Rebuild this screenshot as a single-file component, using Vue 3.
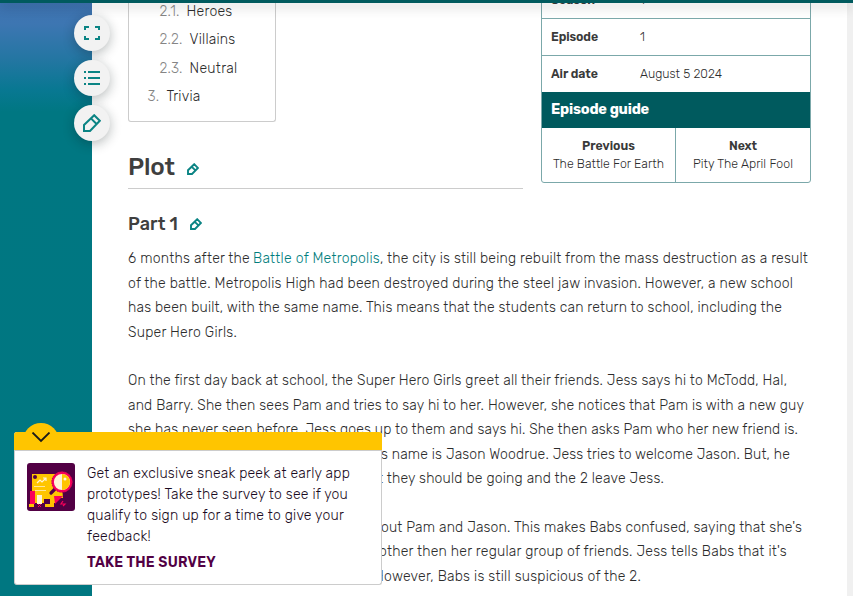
<script setup>
import { ref } from 'vue';

const surveyOpen = ref(true);

const contents = [
    { number: '2.1.', title: 'Heroes', numberWidth: 20, width: 46, nested: true },
    { number: '2.2.', title: 'Villains', numberWidth: 23, width: 46, nested: true },
    { number: '2.3.', title: 'Neutral', numberWidth: 23, width: 48, nested: true },
    { number: '3.', title: 'Trivia', numberWidth: 12, width: 34, nested: false },
];

const details = [
    { label: 'Season', value: '1', labelWidth: 44, width: 6 },
    { label: 'Episode', value: '1', labelWidth: 47, width: 6 },
    { label: 'Air date', value: 'August 5 2024', labelWidth: 47, width: 82 },
];

const guide = [
    { label: 'Previous', title: 'The Battle For Earth', labelWidth: 53, width: 111 },
    { label: 'Next', title: 'Pity The April Fool', labelWidth: 28, width: 100 },
];

// Each line is a list of runs: text, set width and the gap before it
const paragraphs = [
    [
        [
            { text: '6 months after the', width: 122, gap: 0 },
            { text: 'Battle of Metropolis', width: 127, gap: 3, link: true },
            { text: ', the city is still being rebuilt from the mass destruction as a result', width: 428, gap: 0 },
        ],
        [{ text: 'of the battle. Metropolis High had been destroyed during the steel jaw invasion. However, a new school', width: 665, gap: 0 }],
        [{ text: 'has been built, with the same name. This means that the students can return to school, including the', width: 654, gap: 0 }],
        [{ text: 'Super Hero Girls.', width: 109, gap: 0 }],
    ],
    [
        [{ text: 'On the first day back at school, the Super Hero Girls greet all their friends. Jess says hi to McTodd, Hal,', width: 658, gap: 0 }],
        [{ text: 'and Barry. She then sees Pam and tries to say hi to her. However, she notices that Pam is with a new guy', width: 676, gap: 0 }],
        [{ text: 'she has never seen before. Jess goes up to them and says hi. She then asks Pam who her new friend is.', width: 670, gap: 0 }],
        [{ text: 's name is Jason Woodrue. Jess tries to welcome Jason. But, he', width: 409, gap: 253 }],
        [{ text: 't they should be going and the 2 leave Jess.', width: 286, gap: 250 }],
    ],
    [
        [{ text: 'out Pam and Jason. This makes Babs confused, saying that she\'s', width: 421, gap: 253 }],
        [{ text: 'other then her regular group of friends. Jess tells Babs that it\'s', width: 408, gap: 251 }],
        [{ text: 'However, Babs is still suspicious of the 2.', width: 267, gap: 246 }],
    ],
];

const surveyLines = [
    { text: 'Get an exclusive sneak peek at early app', width: 263 },
    { text: 'prototypes! Take the survey to see if you', width: 261 },
    { text: 'qualify to sign up for a time to give your', width: 257 },
    { text: 'feedback!', width: 64 },
];

// Track the text out so that it fills the given width
const vFit = {
    mounted(el, { value }) {
        const natural = el.getBoundingClientRect().width;
        el.style.letterSpacing = `${(value - natural) / el.textContent.length}px`;
    },
};
</script>

<template>
    <div class="page">
        <div class="topbar"></div>

        <aside class="backdrop">
            <nav class="tools">
                <button class="tool">
                    <svg width="18" height="18" viewBox="0 0 18 18"><path d="M2 6V3H6M12 3H16V6M16 12V15H12M6 15H2V12" /></svg>
                </button>
                <button class="tool">
                    <svg width="18" height="18" viewBox="0 0 18 18"><path d="M5 3H17M5 9H17M5 15H17M1 3H3M1 9H3M1 15H3" /></svg>
                </button>
                <button class="tool">
                    <svg width="18" height="18" viewBox="0 0 18 18"><path d="M1 17V11L11.2 1.2L16.8 6.8L7 17ZM8 4.4L13.3 9.7" /></svg>
                </button>
            </nav>
        </aside>

        <main class="article">
            <div class="intro">
                <div class="lead">
                    <ul class="toc">
                        <li v-for="item in contents" :key="item.number" :class="{ nested: item.nested }">
                            <span v-fit="item.numberWidth" class="toc-number fit">{{ item.number }}</span>
                            <span v-fit="item.width" class="fit">{{ item.title }}</span>
                        </li>
                    </ul>
                    <h2>
                        <span v-fit="47" class="fit">Plot</span>
                        <svg class="pencil" width="12" height="12" viewBox="0 0 12 12"><path d="M1 11V7.2L7.2 1.2L11 5L5 11ZM4.8 3.8L8.2 7.2" /></svg>
                    </h2>
                </div>

                <section class="infobox">
                    <div v-for="row in details" :key="row.label" class="row">
                        <div class="label"><span v-fit="row.labelWidth" class="fit">{{ row.label }}</span></div>
                        <div><span v-fit="row.width" class="fit">{{ row.value }}</span></div>
                    </div>
                    <div class="guide-title"><span v-fit="98" class="fit">Episode guide</span></div>
                    <div class="guide">
                        <div v-for="cell in guide" :key="cell.label" class="cell">
                            <span v-fit="cell.labelWidth" class="label fit">{{ cell.label }}</span>
                            <span v-fit="cell.width" class="fit">{{ cell.title }}</span>
                        </div>
                    </div>
                </section>
            </div>

            <h3>
                <span v-fit="50" class="fit">Part 1</span>
                <svg class="pencil" width="12" height="12" viewBox="0 0 12 12"><path d="M1 11V7.2L7.2 1.2L11 5L5 11ZM4.8 3.8L8.2 7.2" /></svg>
            </h3>

            <div class="story">
                <p v-for="(lines, p) in paragraphs" :key="p">
                    <span v-for="(line, l) in lines" :key="l" class="line">
                        <span
                            v-for="run in line"
                            :key="run.text"
                            v-fit="run.width"
                            class="fit"
                            :class="{ link: run.link }"
                            :style="{ marginLeft: run.gap + 'px' }"
                        >{{ run.text }}</span>
                    </span>
                </p>
            </div>
        </main>

        <div class="gutter"></div>

        <div v-if="surveyOpen" class="survey">
            <div class="survey-tab"></div>
            <div class="survey-bar" @click="surveyOpen = false">
                <svg width="20" height="12" viewBox="0 0 20 12"><path d="M1.5 0.5L10 9L18.5 0.5" /></svg>
            </div>
            <div class="survey-body">
                <svg class="survey-art" width="48" height="48" viewBox="0 0 48 48">
                    <rect width="48" height="48" rx="3" fill="#520044" />
                    <path d="M5 11H34L36 35H28V40H8V30H5Z" fill="#ffc500" />
                    <circle cx="8" cy="14" r="2" fill="#520044" />
                    <path d="M10 20L13 17L15 19L19 15M16 15H19V18" fill="none" stroke="#fff3d8" stroke-width="1.2" />
                    <path d="M7 23.5H18M8 27.5H19" stroke="#ffe69a" stroke-width="1" />
                    <path d="M3 28H8V41H3Z" fill="#fa005a" />
                    <path d="M10 32H15V41H10Z" fill="#fff3d8" />
                    <path d="M17 36H23V44H17Z" fill="#520044" />
                    <path d="M2 41H7V44H2ZM18 41H23V44H18Z" fill="#ffc500" />
                    <path d="M23 36H27V44H23Z" fill="#ffc500" />
                    <path d="M7 41H10V44H7ZM15 41H18V44H15Z" fill="#520044" />
                    <path d="M11 41L14 44M14 41L11 44" stroke="#fa005a" />
                    <path d="M27 33H36L28 41Z" fill="#fa005a" />
                    <path d="M24 30L29 25" stroke="#520044" stroke-width="3.2" stroke-linecap="round" />
                    <circle cx="35" cy="19" r="9.3" fill="#fff3d8" stroke="#fa005a" stroke-width="2.4" />
                    <path d="M35 11A8 8 0 0 1 35 27Z" fill="#ffc500" />
                    <circle cx="35" cy="19" r="10.2" fill="none" stroke="#b00050" stroke-width="1" stroke-dasharray="1 1.5" />
                    <circle cx="38" cy="16" r="1.5" fill="#fff3d8" />
                    <path d="M36 38L34 41H38L36 43" fill="none" stroke="#fa005a" stroke-width="1.2" />
                </svg>
                <div class="survey-text">
                    <div v-for="line in surveyLines" :key="line.text">
                        <span v-fit="line.width" class="fit">{{ line.text }}</span>
                    </div>
                    <a class="cta"><span v-fit="129" class="fit">TAKE THE SURVEY</span></a>
                </div>
            </div>
        </div>
    </div>
</template>

<style>
body {
    margin: 0;
}
</style>

<style scoped>
.page {
    position: relative;
    display: flex;
    width: 853px;
    height: 596px;
    overflow: hidden;
    background: #fff;
    color: #2c2c2c;
    font-family: Rubik, Roboto, "Liberation Sans", sans-serif;
    font-size: 14px;
    font-weight: 300;
}

.fit {
    display: inline-block;
    white-space: pre;
}

.topbar {
    position: absolute;
    inset: 0 0 auto;
    height: 3px;
    background: #005a5e;
    box-shadow: 0 3px 12px rgba(0, 0, 0, 0.3);
    z-index: 3;
}

/* Left backdrop with floating tools */
.backdrop {
    flex: none;
    width: 92px;
    background: linear-gradient(#3e72b0 0, #3d76b2 24px, #2376a2 60px, #087892 90px, #007782 112px, #007781 100%);
}

.tools {
    position: relative;
    z-index: 1;
    display: flex;
    flex-direction: column;
    gap: 9px;
    padding: 15px 0 0 74px;
}

.tool {
    display: flex;
    align-items: center;
    justify-content: center;
    width: 36px;
    height: 36px;
    padding: 0;
    border: 0;
    border-radius: 50%;
    background: #f2f2f2;
    box-shadow: 0 3px 12px rgba(14, 25, 26, 0.3);
}

.tool svg,
.pencil {
    fill: none;
    stroke: #0b8484;
    stroke-width: 2;
}

.article {
    flex: 1;
    padding: 0 36px;
}

.intro {
    display: flex;
    justify-content: space-between;
}

.lead {
    width: 395px;
}

.toc {
    box-sizing: border-box;
    width: 148px;
    height: 122px;
    margin: 0;
    padding: 0 0 0 18.5px;
    border: 1px solid #ccc;
    border-top: 0;
    border-radius: 0 0 3px 3px;
    list-style: none;
    line-height: 28.4px;
}

.toc li {
    display: flex;
    gap: 7px;
    position: relative;
    top: -2px;
}

.toc .nested {
    padding-left: 12px;
}

.toc-number {
    color: #858585;
}

h2,
h3 {
    display: flex;
    align-items: center;
    margin: 0;
    color: #3f3f3f;
    font-weight: 500;
}

h2 {
    box-sizing: border-box;
    height: 67px;
    padding-top: 22px;
    border-bottom: 1px solid #ccc;
    font-size: 24.5px;
    gap: 12px;
}

h3 {
    height: 24px;
    margin-top: 23px;
    font-size: 18px;
    gap: 12px;
}

.pencil {
    stroke-width: 1.9;
}

h2 .pencil {
    margin-top: 6px;
}

/* Infobox */
.infobox {
    box-sizing: border-box;
    width: 270px;
    height: 202px;
    margin: -19px 0 0;
    border: 1px solid #7ba8aa;
    border-radius: 3px;
    font-size: 12.3px;
}

.row {
    box-sizing: border-box;
    display: grid;
    grid-template-columns: 89px 1fr;
    align-items: center;
    height: 37px;
    padding: 0 0 1px 9px;
    border-bottom: 1px solid #7ba8aa;
}

.row:nth-child(3) {
    border-bottom: 0;
    padding-bottom: 2px;
}

.label {
    color: #3a3a3a;
    font-weight: 600;
}

.guide-title {
    margin-top: -1px;
    padding-left: 9px;
    height: 36px;
    line-height: 35px;
    background: #005a5e;
    color: #fff;
    font-size: 14.5px;
    font-weight: 700;
}

.guide {
    display: grid;
    grid-template-columns: 133px 1fr;
    height: 54px;
}

.cell {
    display: flex;
    flex-direction: column;
    align-items: center;
    padding-top: 9px;
    line-height: 18px;
}

.cell + .cell {
    border-left: 1px solid #7ba8aa;
}

/* Article text */
.story {
    margin-top: 11px;
}

.story p {
    margin: 0 0 24px;
}

.line {
    display: flex;
    height: 24.5px;
    line-height: 24.5px;
}

.link {
    color: #007d7d;
    font-weight: 400;
    -webkit-text-stroke: 0;
}

.gutter {
    flex: none;
    width: 6px;
    background: #f0f0f0;
}

/* Survey popup */
.survey {
    position: absolute;
    left: 14px;
    top: 432px;
    box-sizing: border-box;
    width: 368px;
    height: 153px;
    border: 1px solid #ccc;
    border-top: 0;
    border-radius: 3px;
    background: #fff;
    z-index: 4;
}

.survey .survey-text,
.story .link {
    font-weight: 300;
}

.survey-tab {
    position: absolute;
    left: 8px;
    top: -9px;
    width: 36px;
    height: 36px;
    border-radius: 50%;
    background: #ffc500;
    clip-path: inset(0 0 18px);
}

.survey-bar {
    position: relative;
    box-sizing: border-box;
    height: 19px;
    margin: 0 -1px;
    padding-left: 17px;
    border-bottom: 1px solid #ccc;
    border-radius: 3px 3px 0 0;
    background: #ffc500;
}

.survey-bar svg {
    display: block;
    fill: none;
    stroke: #1a1a1a;
    stroke-width: 1.8;
}

.survey-body {
    display: flex;
    gap: 12px;
    padding: 12px;
}

.survey-text {
    color: #1a0a22;
    line-height: 21px;
}

.cta {
    display: block;
    margin-top: 5px;
    color: #520044;
    font-weight: 600;
}
</style>
